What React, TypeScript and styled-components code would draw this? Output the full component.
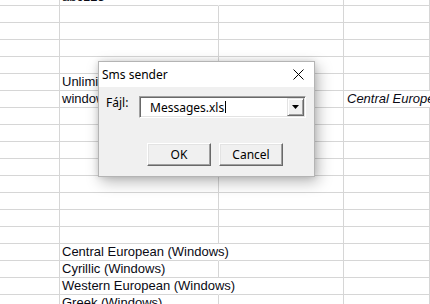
import React from "react";
import styled, { createGlobalStyle } from "styled-components";

const Global = createGlobalStyle`
  html, body { margin: 0; padding: 0; background: #fff; overflow: hidden; }
  body { width: 430px; height: 304px; }
`;

const Page = styled.div`
  position: relative;
  width: 430px;
  height: 304px;
  overflow: hidden;
  background: #fff;
`;

const Sheet = styled.div`
  display: flex;
  flex-direction: column;
  margin-top: -11px;
  font-family: "Liberation Sans", Arial, sans-serif;
  font-size: 13px;
  color: #0a0a14;
`;

const Row = styled.div`
  display: grid;
  grid-template-columns: 60px 159px 125px 1fr;
  height: 17px;
`;

const Cell = styled.div<{ $spill?: boolean; $italic?: boolean }>`
  box-sizing: border-box;
  height: 17px;
  border-bottom: 1px solid #d6d6d6;
  border-right: ${(p) => (p.$spill ? "1px solid transparent" : "1px solid #d6d6d6")};
  padding-left: ${(p) => (p.$italic ? "3px" : "2px")};
  line-height: 16px;
  white-space: nowrap;
  overflow: visible;
  font-style: ${(p) => (p.$italic ? "italic" : "normal")};
  position: relative;
`;

const Dialog = styled.div`
  position: absolute;
  left: 98px;
  top: 61px;
  width: 217px;
  height: 116px;
  box-sizing: border-box;
  border: 1px solid #b4b4b4;
  background: #f0f0f0;
  box-shadow: 3px 5px 14px rgba(0, 0, 0, 0.28), 0 0 6px rgba(0, 0, 0, 0.12);
  display: flex;
  flex-direction: column;
  font-family: "Segoe UI", "Noto Sans", sans-serif;
  font-size: 12px;
  color: #000;
`;

const TitleBar = styled.div`
  height: 25px;
  background: #fff;
  display: flex;
  align-items: center;
  justify-content: space-between;
  padding: 0 10px 0 3px;
`;

const Title = styled.span`
  font-size: 12px;
  line-height: 16px;
`;

const Body = styled.div`
  display: flex;
  flex-direction: column;
  padding: 9px 0 0 7px;
`;

const FieldRow = styled.div`
  display: flex;
  align-items: flex-start;
`;

const Label = styled.span`
  width: 33px;
  line-height: 14px;
  padding-top: 0px;
`;

const Combo = styled.div`
  box-sizing: border-box;
  width: 167px;
  height: 22px;
  display: flex;
  align-items: stretch;
  background: #fff;
  border-top: 1px solid #a0a0a0;
  border-left: 1px solid #a0a0a0;
  border-bottom: 1px solid #fff;
  border-right: 1px solid #fff;
  box-shadow: inset 1px 1px 0 #696969, inset -1px -1px 0 #e3e3e3;
`;

const ComboText = styled.div`
  flex: 1;
  display: flex;
  align-items: center;
  padding-left: 10px;
  font-size: 12px;
`;

const Caret = styled.span`
  display: inline-block;
  width: 1px;
  height: 12px;
  background: #000;
  margin-left: 1px;
`;

const DropButton = styled.div`
  box-sizing: border-box;
  width: 17px;
  margin: 1px 1px 1px 0;
  background: #f0f0f0;
  border-top: 1px solid #e3e3e3;
  border-left: 1px solid #e3e3e3;
  border-bottom: 1px solid #696969;
  border-right: 1px solid #696969;
  box-shadow: inset 1px 1px 0 #fff, inset -1px -1px 0 #a0a0a0;
  display: flex;
  align-items: center;
  justify-content: center;
`;

const Buttons = styled.div`
  display: flex;
  gap: 8px;
  margin-top: 25px;
  padding-left: 41px;
`;

const Button = styled.div`
  box-sizing: border-box;
  width: 64px;
  height: 23px;
  background: #f0f0f0;
  border-top: 1px solid #fff;
  border-left: 1px solid #fff;
  border-bottom: 1px solid #696969;
  border-right: 1px solid #696969;
  box-shadow: inset -1px -1px 0 #a0a0a0, inset 1px 1px 0 #e3e3e3;
  display: flex;
  align-items: center;
  justify-content: center;
  font-size: 12px;
`;

type CellData = { text?: string; spill?: boolean; italic?: boolean };

const rows: CellData[][] = [
  [{}, { text: "abc123", spill: true }, {}, {}],
  [{}, {}, {}, {}],
  [{}, {}, {}, {}],
  [{}, {}, {}, {}],
  [{}, {}, {}, {}],
  [{}, { text: "Unlimited", spill: true }, {}, {}],
  [{}, { text: "windows-1250", spill: true }, {}, { text: "Central European (Windows)", italic: true }],
  [{}, {}, {}, {}],
  [{}, {}, {}, {}],
  [{}, {}, {}, {}],
  [{}, {}, {}, {}],
  [{}, {}, {}, {}],
  [{}, {}, {}, {}],
  [{}, {}, {}, {}],
  [{}, {}, {}, {}],
  [{}, { text: "Central European (Windows)", spill: true }, {}, {}],
  [{}, { text: "Cyrillic (Windows)" }, {}, {}],
  [{}, { text: "Western European (Windows)", spill: true }, {}, {}],
  [{}, { text: "Greek (Windows)" }, {}, {}],
];

export default function App() {
  return (
    <Page>
      <Global />
      <Sheet>
        {rows.map((r, i) => (
          <Row key={i}>
            {r.map((c, j) => (
              <Cell key={j} $spill={c.spill} $italic={c.italic}>
                {c.text}
              </Cell>
            ))}
          </Row>
        ))}
      </Sheet>
      <Dialog>
        <TitleBar>
          <Title>Sms sender</Title>
          <svg width="11" height="11" viewBox="0 0 11 11">
            <path d="M0.5 0.5 L10.5 10.5 M10.5 0.5 L0.5 10.5" stroke="#000" strokeWidth="1" />
          </svg>
        </TitleBar>
        <Body>
          <FieldRow>
            <Label>Fájl:</Label>
            <Combo>
              <ComboText>
                Messages.xls
                <Caret />
              </ComboText>
              <DropButton>
                <svg width="7" height="4" viewBox="0 0 7 4">
                  <path d="M0 0 H7 L3.5 4 Z" fill="#000" />
                </svg>
              </DropButton>
            </Combo>
          </FieldRow>
          <Buttons>
            <Button>OK</Button>
            <Button>Cancel</Button>
          </Buttons>
        </Body>
      </Dialog>
    </Page>
  );
}
